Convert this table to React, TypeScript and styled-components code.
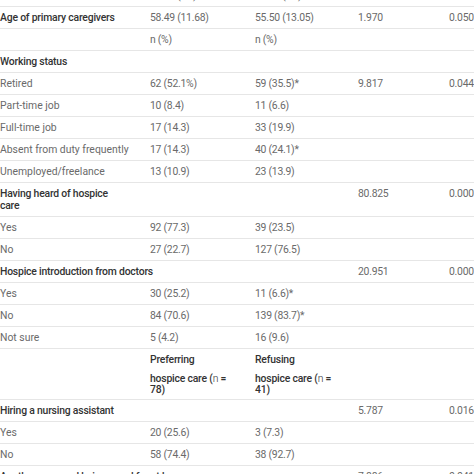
import styled, { createGlobalStyle } from 'styled-components';

const GlobalStyle = createGlobalStyle`
  html, body {
    margin: 0;
    padding: 0;
    background: #ffffff;
  }
  body {
    font-family: Roboto, "Liberation Sans", Arial, sans-serif;
  }
`;

type Row = {
  cells: string[];
  head?: boolean; // bold label rows
  tall?: boolean; // the group header row (Preferring / Refusing)
};

const rows: Row[] = [
  { cells: ['', 'Mean (SD)', 'Mean (SD)', '', ''] },
  { cells: ['Age of primary caregivers', '58.49 (11.68)', '55.50 (13.05)', '1.970', '0.050'], head: true },
  { cells: ['', 'n (%)', 'n (%)', '', ''] },
  { cells: ['Working status', '', '', '', ''], head: true },
  { cells: ['Retired', '62 (52.1%)', '59 (35.5)*', '9.817', '0.044'] },
  { cells: ['Part-time job', '10 (8.4)', '11 (6.6)', '', ''] },
  { cells: ['Full-time job', '17 (14.3)', '33 (19.9)', '', ''] },
  { cells: ['Absent from duty frequently', '17 (14.3)', '40 (24.1)*', '', ''] },
  { cells: ['Unemployed/freelance', '13 (10.9)', '23 (13.9)', '', ''] },
  { cells: ['Having heard of hospice|care', '', '', '80.825', '0.000'], head: true },
  { cells: ['Yes', '92 (77.3)', '39 (23.5)', '', ''] },
  { cells: ['No', '27 (22.7)', '127 (76.5)', '', ''] },
  { cells: ['Hospice introduction from doctors', '', '', '20.951', '0.000'], head: true },
  { cells: ['Yes', '30 (25.2)', '11 (6.6)*', '', ''] },
  { cells: ['No', '84 (70.6)', '139 (83.7)*', '', ''] },
  { cells: ['Not sure', '5 (4.2)', '16 (9.6)', '', ''] },
  { cells: ['', 'Preferring|78', 'Refusing|41', '', ''], tall: true },
  { cells: ['Hiring a nursing assistant', '', '', '5.787', '0.016'], head: true },
  { cells: ['Yes', '20 (25.6)', '3 (7.3)', '', ''] },
  { cells: ['No', '58 (74.4)', '38 (92.7)', '', ''] },
  { cells: ['Another one need being cared for at home', '', '', '7.886', '0.041'], head: true },
];

const colWidths = [150, 105, 103, 91, 60];

function GroupHead({ value }: { value: string }) {
  const [word, n] = value.split('|');
  return (
    <>
      <FirstWord>{word}</FirstWord>
      <Wrapped>
        hospice care (<Italic>n</Italic> =
        <br />
        {n})
      </Wrapped>
    </>
  );
}

function Label({ value }: { value: string }) {
  // '|' marks a forced line break in a label
  const parts = value.split('|');
  return (
    <>
      {parts.map((p, i) => (
        <span key={i}>
          {i > 0 && <br />}
          {p}
        </span>
      ))}
    </>
  );
}

function App() {
  return (
    <>
      <GlobalStyle />
      <Page>
        <Table>
          <colgroup>
            {colWidths.map((w, i) => (
              <Col key={i} w={w} />
            ))}
          </colgroup>
          <tbody>
            {rows.map((row, i) => (
              <tr key={i}>
                {row.cells.map((c, j) => (
                  <Cell
                    key={j}
                    bold={(row.head && j === 0) || row.tall}
                    label={row.head && j === 0}
                    num={j > 0}
                  >
                    {row.tall && c.includes('|') ? <GroupHead value={c} /> : <Label value={c} />}
                  </Cell>
                ))}
              </tr>
            ))}
          </tbody>
        </Table>
      </Page>
    </>
  );
}

const Page = styled.div`
  width: 474px;
  height: 474px;
  overflow: hidden;
  background: #fff;
`;

const Table = styled.table`
  border-collapse: collapse;
  table-layout: fixed;
  width: 509px;
  margin-top: -15px;
  font-size: 10.4px;
  line-height: 12px;
`;

const Col = styled.col<{ w: number }>`
  width: ${(p) => p.w}px;
`;

interface CellProps {
  bold?: boolean;
  label?: boolean;
  num?: boolean;
}

const Cell = styled.td<CellProps>`
  box-sizing: border-box;
  vertical-align: top;
  padding: 5px 10px 4px 0;
  border-bottom: 1px solid #e6e6e6;
  color: ${(p) => (p.bold ? '#333' : '#6a6a6a')};
  font-weight: ${(p) => (p.bold ? 500 : 400)};
  letter-spacing: ${(p) => (p.bold ? '-0.2px' : p.num ? '-0.25px' : '0')};
  white-space: ${(p) => (p.label ? 'nowrap' : 'normal')};
`;

const FirstWord = styled.div`
  margin-bottom: 7px;
`;

const Wrapped = styled.div`
  line-height: 11px;
`;

const Italic = styled.span`
  font-weight: 300;
`;

export default App;
